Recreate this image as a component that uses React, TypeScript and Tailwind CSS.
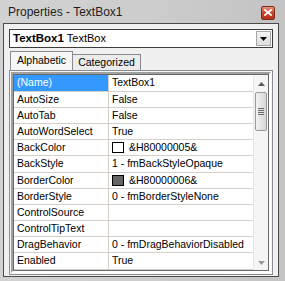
import React from 'react'

type Row = { name: string; value: string; swatch?: string; tall?: boolean }

const rows: Row[] = [
  { name: '(Name)', value: 'TextBox1', tall: true },
  { name: 'AutoSize', value: 'False' },
  { name: 'AutoTab', value: 'False' },
  { name: 'AutoWordSelect', value: 'True' },
  { name: 'BackColor', value: '&H80000005&', swatch: '#ffffff' },
  { name: 'BackStyle', value: '1 - fmBackStyleOpaque', tall: true },
  { name: 'BorderColor', value: '&H80000006&', swatch: '#646464' },
  { name: 'BorderStyle', value: '0 - fmBorderStyleNone' },
  { name: 'ControlSource', value: '' },
  { name: 'ControlTipText', value: '' },
  { name: 'DragBehavior', value: '0 - fmDragBehaviorDisabled' },
  { name: 'Enabled', value: 'True', tall: true },
]

function CloseButton() {
  return (
    <div className="w-[14px] h-[14px] rounded-[2px] border border-[#7a2a1e] bg-gradient-to-b from-[#e5907e] via-[#c9442b] to-[#b8321c] flex items-center justify-center">
      <svg width="8" height="7" viewBox="0 0 8 7">
        <path d="M1 1l6 5M7 1L1 6" stroke="#fff" strokeWidth="1.8" strokeLinecap="square" />
      </svg>
    </div>
  )
}

function Scrollbar() {
  return (
    <div className="w-[15px] flex flex-col bg-[#f5f5f5] border-l border-[#e6e6e6]">
      <div className="h-[17px] flex items-center justify-center">
        <svg width="7" height="4" viewBox="0 0 7 4">
          <path d="M0 4L3.5 0L7 4z" fill="#5a5a5a" />
        </svg>
      </div>
      <div className="h-[39px] mx-[1px] rounded-[2px] border border-[#9a9a9a] bg-gradient-to-r from-[#f2f2f2] to-[#d6d6d6] flex flex-col items-center justify-center gap-[1px]">
        <div className="w-[6px] h-[1px] bg-[#6a6a6a]" />
        <div className="w-[6px] h-[1px] bg-[#6a6a6a]" />
        <div className="w-[6px] h-[1px] bg-[#6a6a6a]" />
        <div className="w-[6px] h-[1px] bg-[#6a6a6a]" />
      </div>
      <div className="flex-1" />
      <div className="h-[15px] flex items-center justify-center">
        <svg width="7" height="4" viewBox="0 0 7 4">
          <path d="M0 0L3.5 4L7 0z" fill="#9a9a9a" />
        </svg>
      </div>
    </div>
  )
}

export default function App() {
  return (
    <div
      className="w-[285px] h-[281px] bg-gradient-to-r from-[#d2d2d2] via-[#cdcdcd] to-[#c3c3c3] flex flex-col overflow-hidden"
      style={{ fontFamily: '"Liberation Sans", Arial, sans-serif' }}
    >
      {/* Title bar */}
      <div className="h-[23px] flex items-center pl-[8px] pr-[10px]">
        <span className="text-[12px] text-[#1e1e1e] flex-1 pt-[1px]">Properties - TextBox1</span>
        <div className="pt-[2px]">
          <CloseButton />
        </div>
      </div>

      {/* Client area */}
      <div className="ml-[3px] mr-[6px] mb-[4px] flex-1 border border-[#4a4a4a] bg-[#f0f0f0] flex flex-col px-[5px] pt-[5px] pb-[1px]">
        {/* Object dropdown */}
        <div className="h-[19px] border border-[#3c3c3c] bg-white flex items-center">
          <div className="flex-1 pl-[3px] text-[11px] text-black">
            <span className="font-bold text-[11.5px]">TextBox1</span> TextBox
          </div>
          <div className="w-[15px] h-[15px] mr-[1px] border border-[#a8a8a8] bg-gradient-to-b from-[#f4f4f4] to-[#dcdcdc] flex items-center justify-center">
            <svg width="7" height="4" viewBox="0 0 7 4">
              <path d="M0 0L3.5 4L7 0z" fill="#000" />
            </svg>
          </div>
        </div>

        {/* Tabs */}
        <div className="mt-[3px] h-[19px] flex items-end pl-[1px] text-[10.5px] text-black">
          <div className="h-[19px] w-[63px] border border-b-0 border-[#898c95] bg-[#f6f6f6] flex items-center justify-center pb-[1px]">
            Alphabetic
          </div>
          <div className="h-[16px] w-[68px] border border-b-0 border-l-0 border-[#898c95] bg-[#ececec] flex items-center justify-center">
            Categorized
          </div>
        </div>

        {/* Tab panel */}
        <div className="flex-1 border border-[#898c95] bg-[#f6f6f6] p-[1px]">
          <div className="h-full border-2 border-t-[#a0a0a0] border-l-[#a0a0a0] border-b-white border-r-white">
            <div className="h-full border border-[#696969] bg-white flex">
              <div className="flex-1 flex flex-col text-[10.5px] text-black">
                {rows.map((r, i) => (
                  <div
                    key={r.name}
                    className={
                      'flex border-b border-[#d4d0c8] shrink-0 ' + (r.tall ? 'h-[17px]' : 'h-[16px]')
                    }
                  >
                    <div
                      className={
                        'w-[95px] pl-[3px] border-r border-[#d4d0c8] flex items-center whitespace-nowrap ' +
                        (i === 0 ? 'bg-[#3399ff] text-white' : '')
                      }
                    >
                      {r.name}
                    </div>
                    <div className="flex-1 pl-[3px] flex items-center whitespace-nowrap overflow-hidden">
                      {r.swatch && (
                        <span
                          className="inline-block w-[12px] h-[11px] border border-black mr-[5px] shrink-0"
                          style={{ background: r.swatch }}
                        />
                      )}
                      {r.value}
                    </div>
                  </div>
                ))}
              </div>
              <Scrollbar />
            </div>
          </div>
        </div>
      </div>
    </div>
  )
}
